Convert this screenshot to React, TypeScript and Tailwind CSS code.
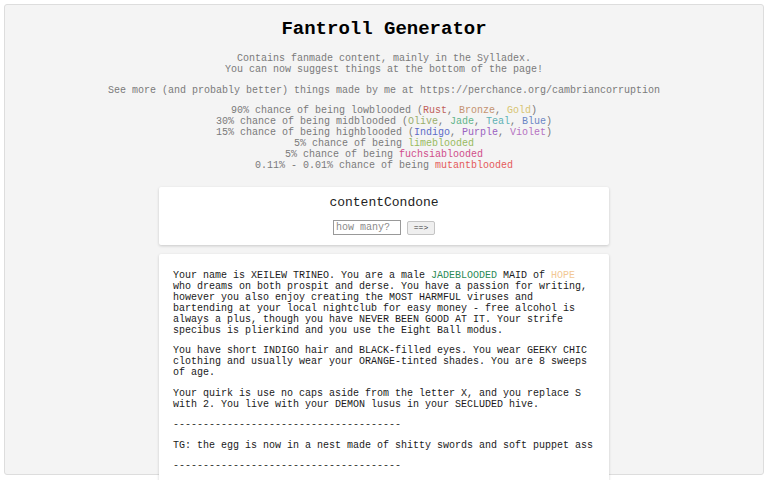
import React, { useState } from 'react';

const mono = { fontFamily: '"Liberation Mono", "DejaVu Sans Mono", monospace' };

type Chance = { lead: string; parts: { text: string; color?: string }[] };

const chances: Chance[] = [
    { lead: '90% chance of being lowblooded (', parts: [
        { text: 'Rust', color: 'text-[#c0605a]' }, { text: ', ' },
        { text: 'Bronze', color: 'text-[#c49270]' }, { text: ', ' },
        { text: 'Gold', color: 'text-[#d8c472]' }, { text: ')' },
    ] },
    { lead: '30% chance of being midblooded (', parts: [
        { text: 'Olive', color: 'text-[#9aae6c]' }, { text: ', ' },
        { text: 'Jade', color: 'text-[#62b48a]' }, { text: ', ' },
        { text: 'Teal', color: 'text-[#5eb2b4]' }, { text: ', ' },
        { text: 'Blue', color: 'text-[#6a86c4]' }, { text: ')' },
    ] },
    { lead: '15% chance of being highblooded (', parts: [
        { text: 'Indigo', color: 'text-[#5c6cc8]' }, { text: ', ' },
        { text: 'Purple', color: 'text-[#9a62c0]' }, { text: ', ' },
        { text: 'Violet', color: 'text-[#b672c2]' }, { text: ')' },
    ] },
    { lead: '5% chance of being ', parts: [{ text: 'limeblooded', color: 'text-[#98ba5e]' }] },
    { lead: '5% chance of being ', parts: [{ text: 'fuchsiablooded', color: 'text-[#d04e8a]' }] },
    { lead: '0.11% - 0.01% chance of being ', parts: [{ text: 'mutantblooded', color: 'text-[#e45a5a]' }] },
];

const Rule = () => <p className="text-[#333]">--------------------------------------</p>;

export default function App() {
    const [count, setCount] = useState('');

    return (
        <div className="bg-white p-1 min-h-[480px]" style={mono}>
            <div className="h-[471px] border border-[#dddddd] rounded-[3px] bg-[#f4f4f4] pt-[13px] text-center">
                <h1 className="text-[19px] leading-[22px] font-bold text-black">Fantroll Generator</h1>

                <div className="mt-[13px] text-[10px] leading-[11px] text-[#7a7a7a]">
                    <p>Contains fanmade content, mainly in the Sylladex.</p>
                    <p>You can now suggest things at the bottom of the page!</p>
                    <p className="mt-[10px]">See more (and probably better) things made by me at https://perchance.org/cambriancorruption</p>
                    <div className="mt-[9px]">
                        {chances.map((c, i) => (
                            <p key={i}>
                                {c.lead}
                                {c.parts.map((p, j) => (
                                    <span key={j} className={p.color}>{p.text}</span>
                                ))}
                            </p>
                        ))}
                    </div>
                </div>

                {/* generator controls */}
                <div className="mx-auto mt-[16px] w-[450px] bg-white rounded-[2px] shadow-[0_1px_3px_rgba(0,0,0,0.18)] pt-[8px] pb-[10px]">
                    <div className="text-[13px] leading-[15px] text-[#222]">contentCondone</div>
                    <div className="mt-[10px] flex items-center justify-center gap-[6px]">
                        <input
                            value={count}
                            onChange={e => setCount(e.target.value)}
                            placeholder="how many?"
                            className="w-[68px] h-[15px] border border-[#999] bg-white px-[2px] text-[10px] leading-[13px] text-[#333] placeholder:text-[#8a8a8a] outline-none"
                            style={mono}
                        />
                        <button className="w-[28px] h-[14px] border border-[#c4c4c4] rounded-[2px] bg-[#efefef] text-[8px] leading-[12px] text-[#333]" style={mono}>
                            ==&gt;
                        </button>
                    </div>
                </div>

                {/* output */}
                <div className="mx-auto mt-[9px] w-[450px] bg-white rounded-[2px] shadow-[0_1px_3px_rgba(0,0,0,0.18)] px-[14px] pt-[16px] pb-[12px] text-left text-[10px] leading-[11px] text-[#1a1a1a]">
                    <p>
                        Your name is XEILEW TRINEO. You are a male <span className="text-[#2c8a56]">JADEBLOODED</span> MAID of <span className="text-[#f2c894]">HOPE</span> who dreams on both prospit and derse. You have a passion for writing, however you also enjoy creating the MOST HARMFUL viruses and bartending at your local nightclub for easy money - free alcohol is always a plus, though you have NEVER BEEN GOOD AT IT. Your strife specibus is plierkind and you use the Eight Ball modus.
                    </p>
                    <p className="mt-[9px]">
                        You have short INDIGO hair and BLACK-filled eyes. You wear GEEKY CHIC clothing and usually wear your ORANGE-tinted shades. You are 8 sweeps of age.
                    </p>
                    <p className="mt-[10px]">
                        Your quirk is use no caps aside from the letter X, and you replace S with 2. You live with your DEMON lusus in your SECLUDED hive.
                    </p>
                    <div className="mt-[9px]"><Rule /></div>
                    <p className="mt-[10px]">TG: the egg is now in a nest made of shitty swords and soft puppet ass</p>
                    <div className="mt-[9px]"><Rule /></div>
                </div>
            </div>
        </div>
    );
}
